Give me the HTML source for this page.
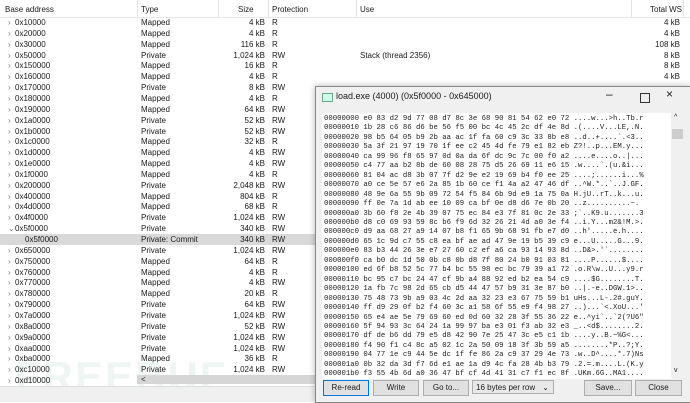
<!DOCTYPE html><html><head><style>
body{margin:0;width:690px;height:401px;overflow:hidden;background:#fff;font-family:"Liberation Sans",sans-serif;font-size:8px;color:#1a1a1a;position:relative}
.a{position:absolute;white-space:pre}
.hdr{position:absolute;top:0;left:0;width:690px;height:17px;border-bottom:1px solid #e5e5e5}
.sep{position:absolute;top:0;height:17px;width:1px;background:#e5e5e5}
.r{position:absolute;left:0;width:690px;height:11px;line-height:11px}
.r span{position:absolute}
#dlg{position:absolute;left:315px;top:86px;width:374px;height:315px;background:#f0f0f0;border:1px solid #888;box-shadow:0 0 6px rgba(0,0,0,.3)}
#hex{position:absolute;left:6px;top:26px;width:348px;height:264px;background:#fff;overflow:hidden;font-family:"Liberation Mono",monospace;font-size:7.3px;line-height:9.45px;padding:2px 0 0 2px;color:#222}
.btn{position:absolute;top:293px;height:14px;border:1px solid #adadad;background:#e1e1e1;text-align:center;line-height:14px;font-size:8px}
</style></head><body>
<div class="hdr">
<span class="a" style="left:5px;top:5px">Base address</span>
<span class="a" style="left:141px;top:5px">Type</span>
<span class="a" style="left:238px;top:5px">Size</span>
<span class="a" style="left:272px;top:5px">Protection</span>
<span class="a" style="left:360px;top:5px">Use</span>
<span class="a" style="left:650px;top:5px">Total WS</span>
<div class="sep" style="left:137px"></div><div class="sep" style="left:218px"></div><div class="sep" style="left:268px"></div><div class="sep" style="left:356px"></div><div class="sep" style="left:631px"></div><div class="sep" style="left:683px"></div>
</div>
<div style="position:absolute;left:0;top:234px;width:315px;height:11px;background:#d9d9d9"></div>
<div class="a" style="left:15px;top:353px;font-size:42px;font-weight:bold;color:rgba(190,215,205,.25);letter-spacing:2px">FREEBUF</div>
<div id="rows"></div>
<div style="position:absolute;left:137px;top:375px;width:178px;height:9px;background:#d6d6d6"><span class="a" style="left:4px;top:0;line-height:9px">&lt;</span></div>
<div style="position:absolute;left:0;top:386px;width:315px;height:15px;background:#f0f0f0;border-top:1px solid #ddd"></div>
<div id="dlg">
<div style="position:absolute;left:6px;top:6px;width:9px;height:7px;border:1px solid #6a8;background:#cfe"></div>
<span class="a" style="left:20px;top:4px;font-size:9px">load.exe (4000) (0x5f0000 - 0x645000)</span>
<span class="a" style="left:290px;top:0px;font-size:12px">&#8211;</span>
<div style="position:absolute;left:324px;top:6px;width:8px;height:8px;border:1px solid #333"></div>
<span class="a" style="left:350px;top:0px;font-size:12px">&#215;</span>
<div id="hex"></div>
<div style="position:absolute;left:355px;top:26px;width:13px;height:264px;background:#f0f0f0"><div style="position:absolute;left:1px;top:16px;width:11px;height:10px;background:#cdcdcd"></div><span class="a" style="left:3px;top:1px;font-size:7px">^</span><span class="a" style="left:3px;top:254px;font-size:7px">v</span></div>
<div class="btn" style="left:7px;width:44px;border-color:#0078d7">Re-read</div>
<div class="btn" style="left:57px;width:44px">Write</div>
<div class="btn" style="left:107px;width:44px">Go to...</div>
<div class="btn" style="left:156px;background:#e8e8e8;text-align:left;padding-left:3px;box-sizing:border-box;width:82px">16 bytes per row<span style="position:absolute;right:4px">&#8964;</span></div>
<div class="btn" style="left:268px;width:46px">Save...</div>
<div class="btn" style="left:319px;width:45px">Close</div>
</div>
<script>
var d=[["0x10000","Mapped","4 kB","R","","4 kB"],["0x20000","Mapped","4 kB","R","","4 kB"],["0x30000","Mapped","116 kB","R","","108 kB"],["0x50000","Private","1,024 kB","RW","Stack (thread 2356)","8 kB"],["0x150000","Mapped","16 kB","R","","8 kB"],["0x160000","Mapped","4 kB","R","","4 kB"],["0x170000","Private","8 kB","RW","",""],["0x180000","Mapped","4 kB","R","",""],["0x190000","Mapped","64 kB","RW","",""],["0x1a0000","Private","52 kB","RW","",""],["0x1b0000","Private","52 kB","RW","",""],["0x1c0000","Mapped","32 kB","R","",""],["0x1d0000","Mapped","4 kB","RW","",""],["0x1e0000","Mapped","4 kB","RW","",""],["0x1f0000","Mapped","4 kB","R","",""],["0x200000","Private","2,048 kB","RW","",""],["0x400000","Mapped","804 kB","R","",""],["0x4d0000","Mapped","68 kB","R","",""],["0x4f0000","Private","1,024 kB","RW","",""],["0x5f0000","Private","340 kB","RW","",""],["0x5f0000","Private: Commit","340 kB","RW","",""],["0x650000","Private","1,024 kB","RW","",""],["0x750000","Mapped","64 kB","R","",""],["0x760000","Mapped","4 kB","R","",""],["0x770000","Mapped","4 kB","RW","",""],["0x780000","Mapped","20 kB","R","",""],["0x790000","Private","64 kB","RW","",""],["0x7a0000","Private","1,024 kB","RW","",""],["0x8a0000","Private","52 kB","RW","",""],["0x9a0000","Private","1,024 kB","RW","",""],["0xaa0000","Private","1,024 kB","RW","",""],["0xba0000","Mapped","36 kB","R","",""],["0xc10000","Private","1,024 kB","RW","",""],["0xd10000","","","","",""]];
var h="";d.forEach(function(r,i){var y=17+i*10.85;var ch=i==20;var ar=i==19?"&#8964;":(ch?"":"&#8250;");
h+='<div class="r" style="top:'+y+'px"><span style="left:8px;color:#777">'+ar+'</span><span style="left:'+(ch?25:15)+'px">'+r[0]+'</span><span style="left:141px">'+r[1]+'</span><span style="right:425px">'+r[2]+'</span><span style="left:272px">'+r[3]+'</span><span style="left:360px">'+r[4]+'</span><span style="right:10px">'+r[5]+'</span></div>';});
document.getElementById('rows').innerHTML=h;
var hx=["e0 83 d2 9d 77 08 d7 8c 3e 68 90 81 54 62 e0 72 ....w...>h..Tb.r","1b 28 c6 86 d6 be 56 f5 00 bc 4c 45 2c df 4e 8d .(....V...LE,.N.","98 b5 64 05 b9 2b aa ac 1f fa 60 c9 3c 33 8b e8 ..d..+....`.<3..","5a 3f 21 97 19 70 1f ee c2 45 4d fe 79 e1 82 eb Z?!..p...EM.y...","ca 99 96 f8 65 97 0d 0a da 6f dc 9c 7c 00 f0 a2 ....e....o..|...","c4 77 aa b2 8b de 60 08 28 75 d5 26 69 11 e6 15 .w....`.(u.&i...","81 04 ac d8 3b 07 7f d2 9e e2 19 69 b4 f0 ee 25 ....;......i...%","a0 ce 5e 57 e6 2a 85 1b 60 ce f1 4a a2 47 46 df ..^W.*..`..J.GF.","48 9e 6a 55 9b 09 72 54 f5 84 6b 9d e9 1a 75 0a H.jU..rT..k...u.","ff 0e 7a 1d ab ee 10 09 ca bf 0e d8 d6 7e 0b 20 ..z..........~.","3b 60 f8 2e 4b 39 07 75 ec 84 e3 7f 81 0c 2e 33 ;`..K9.u.......3","d8 c0 69 93 59 8c b6 f9 6d 32 26 21 4d a0 3e f4 ..i.Y...m2&!M.>.","d9 aa 68 27 a9 14 07 b8 f1 65 9b 68 91 fb e7 d0 ..h'.....e.h....","65 1c 9d c7 55 c8 ea bf ae ad 47 9e 19 b5 39 c9 e...U.....G...9.","83 b3 44 26 3e e7 27 60 c2 ef a6 ca 93 14 93 8d ..D&>.'`........","ca b0 dc 1d 50 0b c8 0b d8 7f 80 24 b0 91 03 81 ....P......$....","ed 6f b8 52 5c 77 b4 bc 55 98 ec bc 79 39 a1 72 .o.R\\w..U...y9.r","bc 95 c7 bc 24 47 cf 9b a4 88 92 ed b2 ea 54 c9 ....$G........T.","1a fb 7c 98 2d 65 cb d5 44 47 57 b9 31 3e 87 b0 ..|.-e..DGW.1>..","75 48 73 9b a9 03 4c 2d aa 32 23 e3 67 75 59 b1 uHs...L-.2#.guY.","ff d9 29 0f b2 f4 60 3c a1 58 6f 55 e9 f4 98 27 ..)...`<.XoU...'","65 e4 ae 5e 79 69 60 ed 0d 60 32 28 3f 55 36 22 e..^yi`..`2(?U6\"","5f 94 93 3c 64 24 1a 99 97 ba e3 01 f3 ab 32 e3 _..<d$........2.","df de b6 dd 79 e5 d8 42 90 7e 25 47 3c e5 c1 1b ....y..B.~%G<...","f4 90 f1 c4 8c a5 02 1c 2a 50 09 18 3f 3b 59 a5 ........*P..?;Y.","04 77 1e c9 44 5e dc 1f fe 86 2a c9 37 29 4e 73 .w..D^....*.7)Ns","0b 32 da 3d f7 6d e1 ae 1a d9 4c fa 28 4b b3 79 .2.=.m....L.(K.y","f3 55 4b 6d a0 36 47 bf cf 4d 41 31 c7 f1 ec 8f .UKm.6G..MA1...."];
var t="";hx.forEach(function(l,i){var a=("00000000"+(i*16).toString(16)).slice(-8);t+=a+" "+l.replace(/&/g,"&amp;").replace(/</g,"&lt;").replace(/>/g,"&gt;")+"<br>";});
document.getElementById('hex').innerHTML='<div style="white-space:pre">'+t+'</div>';
</script>
</body></html>
